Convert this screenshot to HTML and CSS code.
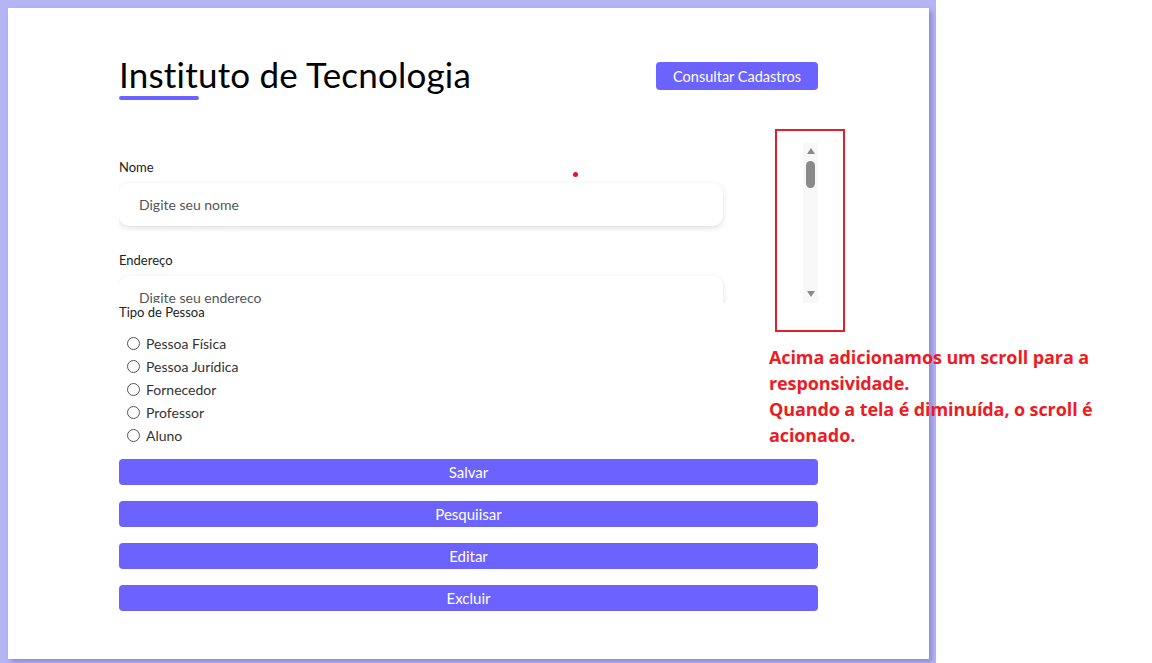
FILE: index.html
```html
<!DOCTYPE html>
<html lang="pt-BR">
<head>
<meta charset="utf-8">
<title>Instituto de Tecnologia</title>
<link rel="stylesheet" href="styles.css">
</head>
<body>
<div class="frame">
  <div class="card">
    <div class="inner">
      <header class="header">
        <div class="brand">
          <h1 class="title">Instituto de Tecnologia</h1>
          <div class="title-bar"></div>
        </div>
        <button class="btn-consult">Consultar Cadastros</button>
      </header>

      <div class="scroll-area">
        <div class="scroll-content">
          <label class="field-label">Nome</label>
          <div class="input">Digite seu nome</div>
          <label class="field-label second">Endereço</label>
          <div class="input">Digite seu endereco</div>
        </div>
        <div class="scrollbar">
          <div class="arrow-up"></div>
          <div class="thumb"></div>
          <div class="track-fill"></div>
          <div class="arrow-down"></div>
        </div>
      </div>

      <div class="type-label">Tipo de Pessoa</div>
      <ul class="radios">
        <li><span class="radio"></span>Pessoa Física</li>
        <li><span class="radio"></span>Pessoa Jurídica</li>
        <li><span class="radio"></span>Fornecedor</li>
        <li><span class="radio"></span>Professor</li>
        <li><span class="radio"></span>Aluno</li>
      </ul>

      <div class="actions">
        <button class="btn-action">Salvar</button>
        <button class="btn-action">Pesquiisar</button>
        <button class="btn-action">Editar</button>
        <button class="btn-action">Excluir</button>
      </div>
    </div>
  </div>
</div>

<div class="dot"></div>
<div class="highlight-box"></div>
<p class="note">Acima adicionamos um scroll para a responsividade.<br>Quando a tela é diminuída, o scroll é acionado.</p>
</body>
</html>
```

FILE: styles.css
```css
* { box-sizing: border-box; }
html, body { margin: 0; padding: 0; }
body {
  width: 1152px;
  height: 663px;
  background: #ffffff;
  font-family: "Lato", "Noto Sans", sans-serif;
  position: relative;
  overflow: hidden;
}
.frame {
  width: 936px;
  height: 663px;
  background: #b5b4f5;
  padding: 8px 7px 4px 8px;
}
.card {
  width: 921px;
  height: 651px;
  background: #ffffff;
  box-shadow: 3px 3px 5px rgba(90, 90, 170, 0.45);
}
.inner {
  width: 699px;
  margin-left: 111px;
  padding-top: 46px;
}
.header {
  display: flex;
  justify-content: space-between;
  align-items: flex-start;
}
.title {
  margin: 0;
  font-size: 35px;
  line-height: 40px;
  font-weight: 400;
  color: #000;
  letter-spacing: 0.2px;
}
.title-bar {
  width: 80px;
  height: 4px;
  margin-top: 2px;
  background: #6c63ff;
  border-radius: 2px;
}
.btn-consult {
  height: 28px;
  width: 162px;
  margin-top: 8px;
  border: none;
  border-radius: 4px;
  background: #6c63ff;
  color: #fff;
  font-family: inherit;
  font-size: 14.5px;
  padding: 0;
}
.scroll-area {
  display: flex;
  height: 160px;
  margin-top: 43px;
}
.scroll-content {
  width: 684px;
  height: 160px;
  overflow: hidden;
  padding-top: 16px;
}
.field-label {
  display: block;
  font-size: 13px;
  line-height: 16px;
  color: #222;
}
.field-label.second { margin-top: 26px; }
.input {
  width: 604px;
  height: 43px;
  margin-top: 8px;
  border-radius: 10px;
  background: #fff;
  box-shadow: 0 2px 6px rgba(0, 0, 0, 0.13);
  padding-left: 20px;
  font-size: 14px;
  line-height: 43px;
  color: #555;
}
.scrollbar {
  width: 15px;
  height: 160px;
  background: #f8f8f8;
  display: flex;
  flex-direction: column;
  align-items: center;
}
.arrow-up {
  margin-top: 5px;
  width: 0;
  height: 0;
  border-left: 4px solid transparent;
  border-right: 4px solid transparent;
  border-bottom: 6px solid #8a8a8a;
}
.thumb {
  margin-top: 7px;
  width: 9px;
  height: 27px;
  border-radius: 5px;
  background: #8a8a8a;
}
.track-fill { flex: 1; }
.arrow-down {
  margin-bottom: 6px;
  width: 0;
  height: 0;
  border-left: 4px solid transparent;
  border-right: 4px solid transparent;
  border-top: 6px solid #8a8a8a;
}
.type-label {
  font-size: 13px;
  line-height: 16px;
  color: #222;
  margin-top: 1px;
}
.radios {
  list-style: none;
  margin: 12px 0 0 0;
  padding: 0;
}
.radios li {
  display: flex;
  align-items: center;
  height: 23px;
  font-size: 14px;
  color: #333;
}
.radio {
  width: 13px;
  height: 13px;
  border: 1px solid #555;
  border-radius: 50%;
  margin-left: 8px;
  margin-right: 6px;
}
.actions {
  display: flex;
  flex-direction: column;
  gap: 16px;
  margin-top: 12px;
}
.btn-action {
  height: 26px;
  width: 699px;
  border: none;
  border-radius: 4px;
  background: #6c63ff;
  color: #fff;
  font-family: inherit;
  font-size: 15px;
  padding: 0;
}
.dot {
  position: absolute;
  left: 573px;
  top: 172px;
  width: 5px;
  height: 5px;
  border-radius: 50%;
  background: #e3131f;
}
.highlight-box {
  position: absolute;
  left: 775px;
  top: 129px;
  width: 70px;
  height: 203px;
  border: 2.5px solid #e3202a;
}
.note {
  position: absolute;
  left: 769px;
  top: 344px;
  margin: 0;
  width: 370px;
  font-family: "Open Sans", "Lato", sans-serif;
  font-weight: 700;
  font-size: 18px;
  line-height: 26px;
  letter-spacing: -0.1px;
  color: #ec1c24;
}
```
